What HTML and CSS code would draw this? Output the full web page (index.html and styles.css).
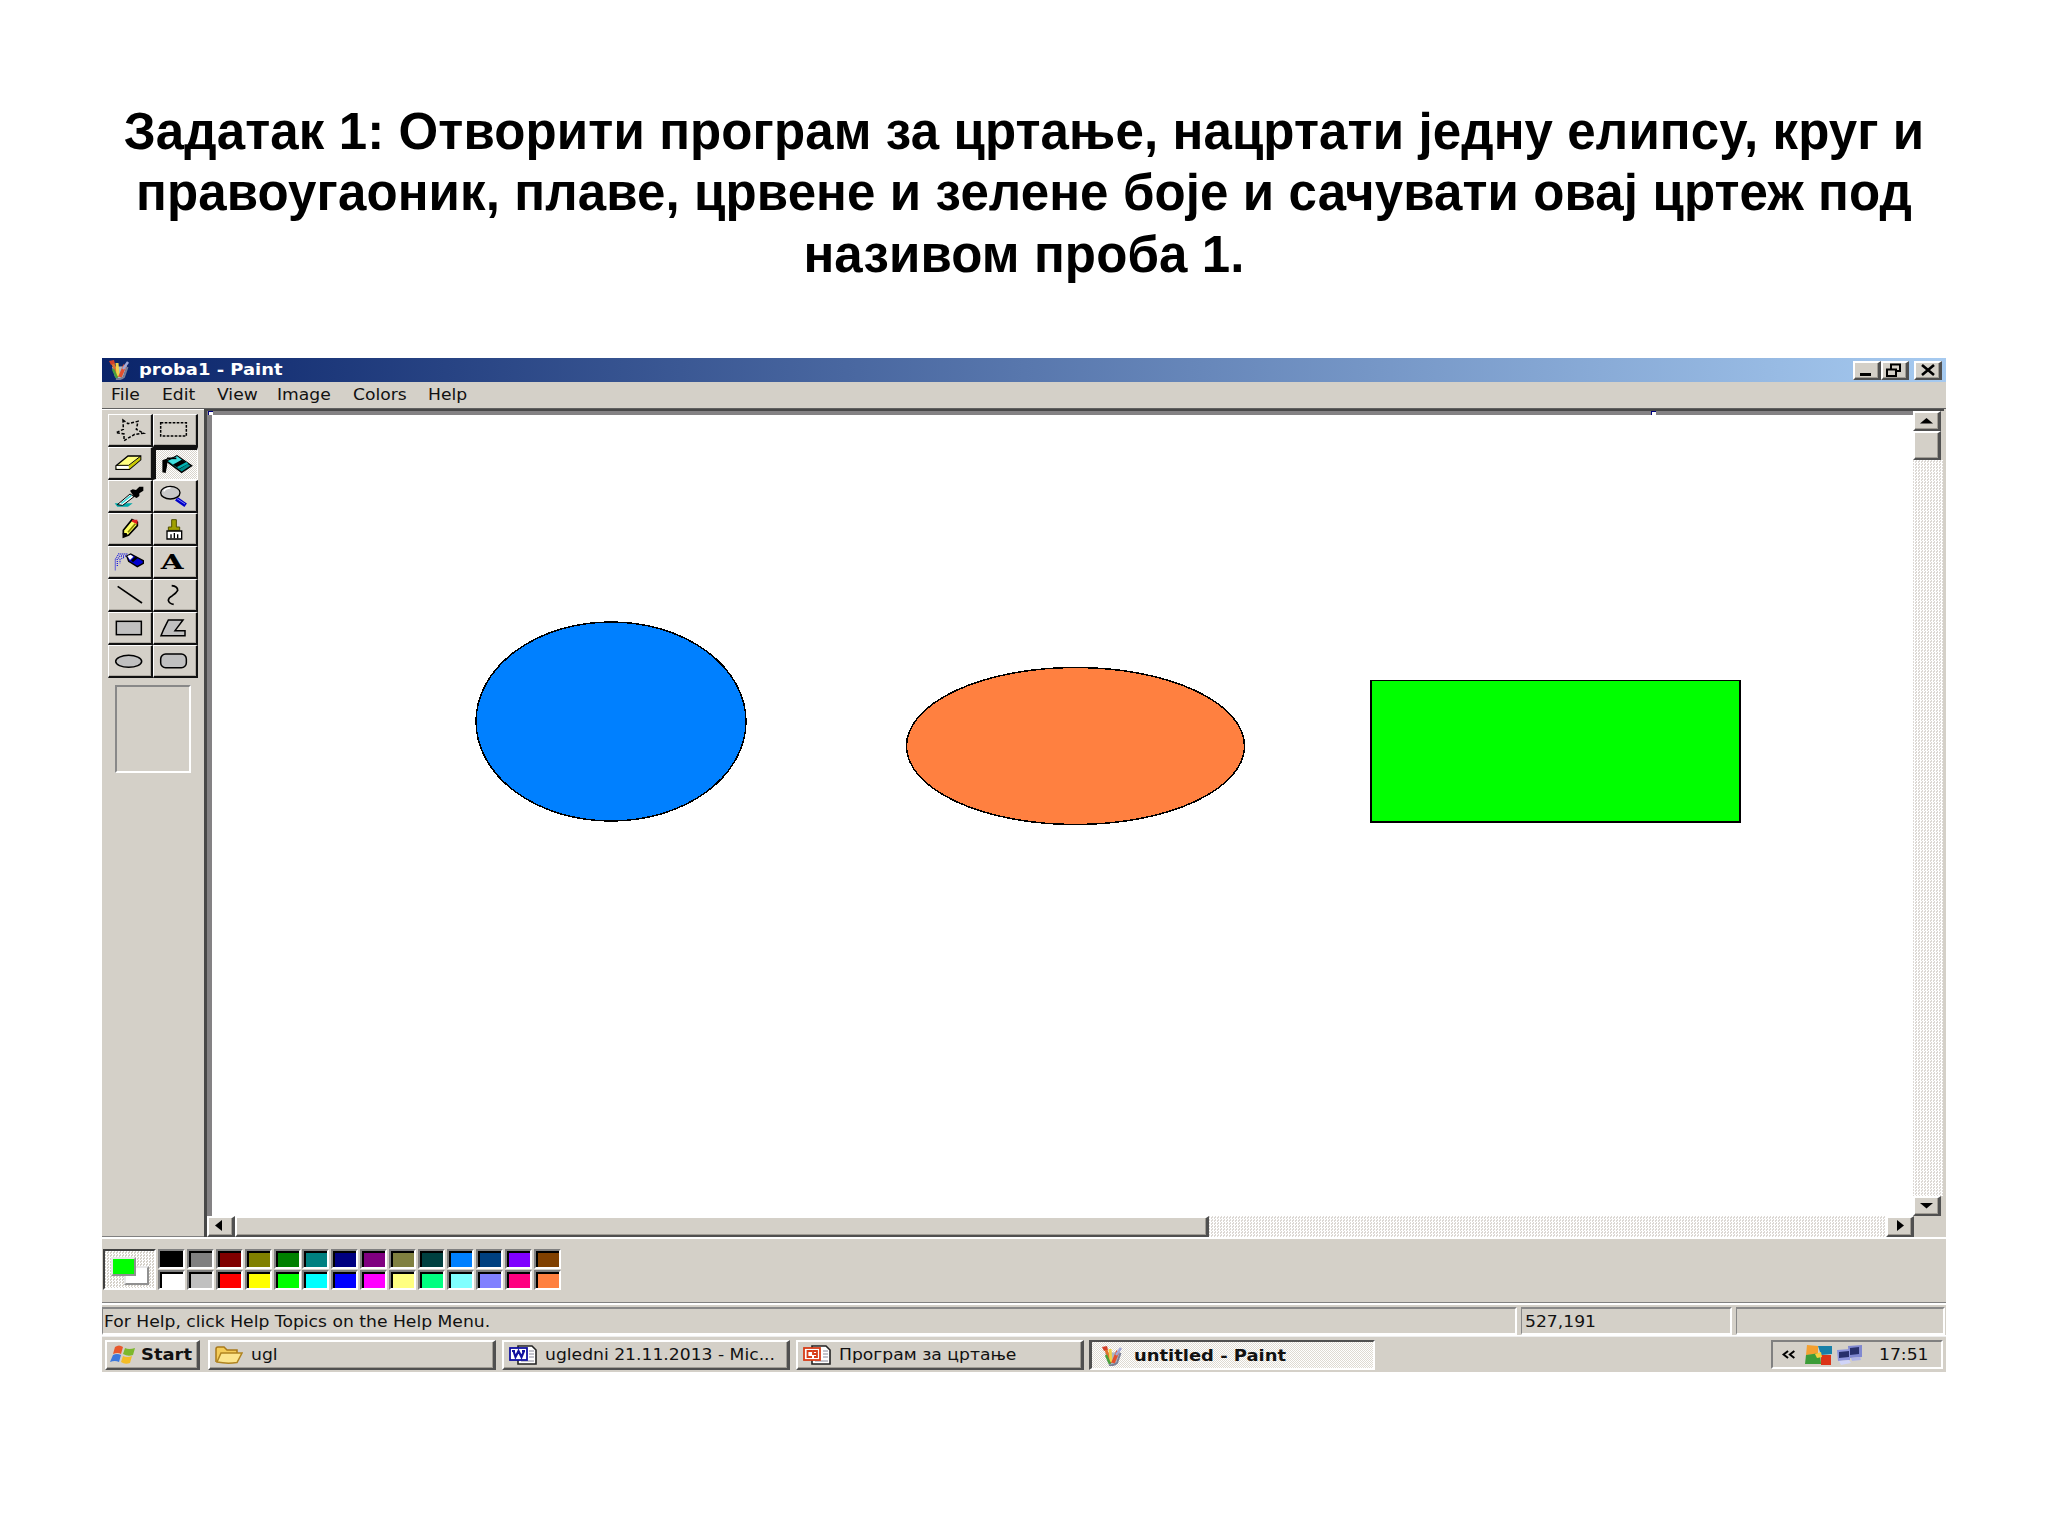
FILE: index.html
```
<!DOCTYPE html>
<html lang="sr">
<head>
<meta charset="utf-8">
<title>proba1 - Paint</title>
<link rel="stylesheet" href="styles.css">
</head>
<body>
<h1 class="task">Задатак 1: Отворити програм за цртање, нацртати једну елипсу, круг и<br>правоугаоник, плаве, црвене и зелене боје и сачувати овај цртеж под<br>називом проба 1.</h1>

<svg class="defs" width="0" height="0">
  <symbol id="cup" viewBox="0 0 20 20">
    <path d="M3 7 L6 17 Q10 20 14 17 L18 6 Z" fill="#a9b6c4"/>
    <path d="M0 1 L5 0 L6 4 L2 5 Z" fill="#d4402a"/>
    <path d="M4 4 L9 17" stroke="#e0702c" stroke-width="3"/>
    <path d="M8 3 L9 16" stroke="#f0d24a" stroke-width="3"/>
    <path d="M16 5 L11 17" stroke="#e4502e" stroke-width="3.500"/>
    <path d="M4 9 L8 18" stroke="#4aa03c" stroke-width="2.500"/>
    <path d="M19 2 L14 9" stroke="#a0a8d8" stroke-width="2.500"/>
    <path d="M18.500 7 L15 17 Q11 20 7 19" stroke="#7a7f96" stroke-width="2" fill="none"/>
  </symbol>
</svg>

<div class="window">
  <div class="titlebar">
    <svg class="cup"><use href="#cup"/></svg>
    <span class="title wider">proba1 - Paint</span>
    <div class="btn winbtn"><svg viewBox="0 0 28 19"><rect x="7" y="12" width="11" height="3"/></svg></div>
    <div class="btn winbtn"><svg viewBox="0 0 28 19"><path d="M10 8V3.500H19V10H15M6 8.500H15V15H6Z M9 3.500H20M5 8.500H16" fill="none" stroke="#000" stroke-width="2"/></svg></div>
    <div class="btn winbtn close"><svg viewBox="0 0 28 19"><path d="M8 4L20 14M20 4L8 14" stroke="#000" stroke-width="2.600"/></svg></div>
  </div>
  <div class="menu">
    <span class="wide m1">File</span><span class="wide m2">Edit</span><span class="wide m3">View</span><span class="wide m4">Image</span><span class="wide m5">Colors</span><span class="wide m6">Help</span>
  </div>

  <div class="work">
    <div class="side">
      <div class="tools">
        <div class="tool"><svg viewBox="0 0 134 99"><path d="M45 18L60 29L90 22L85 46L107 58L80 61L48 80L48 60L24 56L46 46Z" fill="none" stroke="#000" stroke-width="4.500" stroke-dasharray="9 5"/></svg></div>
        <div class="tool"><svg viewBox="0 0 134 99"><rect x="23" y="26" width="77" height="40" fill="none" stroke="#000" stroke-width="4.500" stroke-dasharray="8 4"/></svg></div>
        <div class="tool"><svg viewBox="0 0 134 99"><path d="M24 56L60 27H98V38L64 67H24Z" fill="#ffff80" stroke="#000" stroke-width="4"/><path d="M26 57H62V65H26Z" fill="#fff"/><path d="M62 57L97 29V38L64 66Z" fill="#c8c800"/><path d="M26 55H62L97 28" fill="none" stroke="#000" stroke-width="3"/></svg></div>
        <div class="tool on"><svg viewBox="0 0 134 99"><path d="M28 40L44 34L42 58L38 78L28 76Z"/><path d="M40 42L72 26L116 56L86 76Z" fill="#008c8c" stroke="#000" stroke-width="4"/><path d="M46 42L72 28L88 40L60 52Z" fill="#40e0e0"/><path d="M60 53L86 38L106 50L80 66Z"/><path d="M72 60L100 45L106 50L78 65Z" fill="#00b4b4"/><path d="M42 34H70" stroke="#000" stroke-width="5"/></svg></div>
        <div class="tool"><svg viewBox="0 0 134 99"><path d="M20 70H74L60 80H28Z" fill="#00a8a8"/><path d="M28 74L66 42L78 50L44 76Z" fill="#fff" stroke="#000" stroke-width="3"/><path d="M40 70L70 46" stroke="#40d8d8" stroke-width="5"/><path d="M66 32L74 28L84 30L94 20H106V32L94 40V48L86 54L78 50Z"/></svg></div>
        <div class="tool"><svg viewBox="0 0 134 99"><path d="M70 56L98 76" stroke="#0000c8" stroke-width="13"/><path d="M72 56L96 72" stroke="#8080ff" stroke-width="3"/><ellipse cx="52" cy="38" rx="29" ry="19" fill="#c8c8c8" stroke="#000" stroke-width="4"/><path d="M32 34Q38 24 52 24" stroke="#fff" stroke-width="4" fill="none"/></svg></div>
        <div class="tool"><svg viewBox="0 0 134 99"><path d="M46 52L72 20L88 28V38L62 66L46 72Z" fill="#ffff60" stroke="#000" stroke-width="5"/><path d="M60 58L82 32" stroke="#808000" stroke-width="5"/><path d="M72 20H88V34L72 26Z" fill="#e02020"/><path d="M44 60H56L58 66L46 74Z"/></svg></div>
        <div class="tool"><svg viewBox="0 0 134 99"><path d="M56 20H70V42H80V52H46V42H56Z" fill="#a0a000" stroke="#505000" stroke-width="3"/><path d="M42 54H86V78H42Z" fill="#fff" stroke="#000" stroke-width="4"/><path d="M54 64V76M64 60V76M74 64V76" stroke="#000" stroke-width="4"/></svg></div>
        <div class="tool"><svg viewBox="0 0 134 99"><path d="M58 24H32L22 40V74M54 30H36L28 40V62M48 34L36 40V52" fill="none" stroke="#2020e0" stroke-width="4" stroke-dasharray="3 3"/><path d="M56 30L68 24L106 44V52L88 62L62 46Z" stroke="#000" stroke-width="4" fill="#0000d0"/><path d="M58 30L68 26L76 32L66 42Z" fill="#fff"/><path d="M72 46L86 34" stroke="#000" stroke-width="8"/></svg></div>
        <div class="tool letter"><span>A</span></div>
        <div class="tool"><svg viewBox="0 0 134 99"><path d="M29 22L102 72" stroke="#000" stroke-width="5"/></svg></div>
        <div class="tool"><svg viewBox="0 0 134 99"><path d="M56 20Q74 22 74 34Q70 42 58 50Q46 56 46 64Q48 74 62 76" fill="none" stroke="#000" stroke-width="5"/></svg></div>
        <div class="tool"><svg viewBox="0 0 134 99"><rect x="25" y="28" width="75" height="40" fill="#c0c0c0" stroke="#000" stroke-width="4.500"/></svg></div>
        <div class="tool"><svg viewBox="0 0 134 99"><path d="M46 24H90L66 56H96V71H24L32 52Z" fill="#c0c0c0" stroke="#000" stroke-width="4.500"/></svg></div>
        <div class="tool"><svg viewBox="0 0 134 99"><ellipse cx="62" cy="49" rx="39" ry="18" fill="#c0c0c0" stroke="#000" stroke-width="4.500"/></svg></div>
        <div class="tool"><svg viewBox="0 0 134 99"><rect x="23" y="27" width="77" height="41" rx="15" fill="#c0c0c0" stroke="#000" stroke-width="4.500"/></svg></div>
      </div>
      <div class="options"></div>
    </div>
    <div class="view">
      <div class="row">
        <div class="canvas">
          <i class="handle h1"></i><i class="handle h2"></i>
          <svg class="drawing" viewBox="212 415 1702 801" shape-rendering="crispEdges">
            <g stroke="#000" stroke-width="1.500">
              <ellipse cx="611" cy="721.500" rx="135" ry="99.500" fill="#0080ff"/>
              <ellipse cx="1075.500" cy="746" rx="169" ry="78.500" fill="#ff8040"/>
              <rect x="1371" y="680.500" width="369" height="141.500" fill="#00ff00"/>
            </g>
          </svg>
        </div>
        <div class="vscroll">
          <div class="btn sbtn"><svg viewBox="0 0 28 20"><path d="M7 12.500L13.500 7L20 12.500Z"/></svg></div>
          <div class="btn vthumb"></div>
          <div class="track"></div>
          <div class="btn sbtn"><svg viewBox="0 0 28 20"><path d="M7 7L13.500 12.500L20 7Z"/></svg></div>
        </div>
      </div>
      <div class="hscroll">
        <div class="btn sbtn"><svg viewBox="0 0 28 20"><path d="M15 4V15L8 9.500Z"/></svg></div>
        <div class="btn hthumb"></div>
        <div class="track"></div>
        <div class="btn sbtn"><svg viewBox="0 0 28 20"><path d="M11 4V15L18 9.500Z"/></svg></div>
        <div class="corner"></div>
      </div>
    </div>
  </div>

  <div class="palette">
    <div class="current"><i class="back"></i><i class="fore"></i></div>
    <div class="colors" id="colors"></div>
  </div>

  <div class="status">
    <div class="pane p1"><span class="wide">For Help, click Help Topics on the Help Menu.</span></div>
    <div class="pane p2"><span class="wide">527,191</span></div>
    <div class="pane p3"></div>
  </div>

  <div class="taskbar">
    <div class="btn start">
      <svg class="flag" viewBox="0 0 26 20"><path d="M5 2Q9 -1 13 2L11 9Q8 7 3 9Z" fill="#e8582c"/><path d="M15 3Q19 5 25 3L23 10Q18 12 13 9Z" fill="#7cb82c"/><path d="M3 10Q7 8 11 10L9 17Q5 15 0 17Z" fill="#3c78dc"/><path d="M13 11Q17 13 22 11L20 18Q15 20 11 17Z" fill="#f4bc24"/></svg>
      <b class="wider">Start</b>
    </div>
    <div class="btn task-btn">
      <svg class="ico" viewBox="0 0 28 20"><path d="M1 17V4Q1 2 3 2H9L12 5H22V8" fill="#f4cc58" stroke="#a87818" stroke-width="1.500"/><path d="M2 17L6 8H27L22 17.500Q12 19 2 17Z" fill="#fce58c" stroke="#b08420" stroke-width="1.500"/></svg>
      <span class="wide">ugl</span>
    </div>
    <div class="btn task-btn">
      <svg class="ico" viewBox="0 0 28 20"><path d="M9 1H23L27 5V19H9Z" fill="#fff" stroke="#222" stroke-width="1.600"/><path d="M20 6H25M20 9H25M20 12H25M12 16H25" stroke="#889"/><rect x="1" y="3" width="17" height="12" fill="#fff" stroke="#1010a0" stroke-width="1.800"/><path d="M3 6H6M4.500 6L6.500 12L9.500 6L12.500 12L15 6M13 6H16" fill="none" stroke="#1010a0" stroke-width="2.200"/></svg>
      <span class="wide">ugledni 21.11.2013 - Mic...</span>
    </div>
    <div class="btn task-btn">
      <svg class="ico" viewBox="0 0 28 20"><path d="M9 1H23L27 5V19H9Z" fill="#fff" stroke="#222" stroke-width="1.600"/><path d="M20 6H25M20 9H25M20 12H25M12 16H25" stroke="#889"/><rect x="1" y="3" width="16" height="12" fill="#fff" stroke="#d83c18" stroke-width="1.800"/><path d="M9 6H4.500V12H9M11 12H14V6H10V9H14" fill="none" stroke="#d83c18" stroke-width="1.800"/></svg>
      <span class="wide">Програм за цртање</span>
    </div>
    <div class="task-btn active">
      <svg class="cup"><use href="#cup"/></svg>
      <b class="wider">untitled - Paint</b>
    </div>
    <div class="tray">
      <svg class="chev" viewBox="0 0 15 10"><path d="M7 1L2 5L7 9M14 1L9 5L14 9" fill="none" stroke="#000" stroke-width="2.200"/></svg>
      <svg class="avg" viewBox="0 0 28 20"><path d="M2 0L13 1V9L1 10Z" fill="#f4a030"/><path d="M13 1H27V9L16 10Z" fill="#1880a8"/><path d="M1 10L15 8L16 19H0Z" fill="#3c9c38"/><path d="M16 10H26V20H16Z" fill="#dc3418"/><path d="M10 9L16 7L17 12L12 13Z" fill="#f8d040"/></svg>
      <svg class="net" viewBox="0 0 26 20"><path d="M11 1L25 0V12L12 13Z" fill="#8088d0"/><path d="M13 3L22 2V9L13 10Z" fill="#28306c"/><path d="M14 13L23 12L24 15L15 16Z" fill="#b0b4e8"/><path d="M0 5L13 4V15L1 16Z" fill="#8c94dc"/><path d="M2 7L12 6V12L2 13Z" fill="#28306c"/><path d="M2 16L12 15L14 18L4 20Z" fill="#d0d4f8"/></svg>
      <span class="clock wide">17:51</span>
    </div>
  </div>
</div>

<script>
var top_row = ["#000000","#808080","#800000","#808000","#008000","#008080","#000080","#800080","#808040","#004040","#0080ff","#004080","#8000ff","#804000"];
var bottom_row = ["#ffffff","#c0c0c0","#ff0000","#ffff00","#00ff00","#00ffff","#0000ff","#ff00ff","#ffff80","#00ff80","#80ffff","#8080ff","#ff0080","#ff8040"];
var colors = document.getElementById("colors");
top_row.concat(bottom_row).forEach(function(c) {
  var el = document.createElement("i");
  el.className = "swatch";
  el.style.backgroundColor = c;
  colors.appendChild(el);
});
</script>
</body>
</html>
```
FILE: styles.css
```
* {
  box-sizing: border-box;
}

body {
  margin: 0;
  background: #fff;
  font-family: "DejaVu Sans", Verdana, sans-serif;
  font-size: 15px;
  color: #111;
}

svg {
  display: block;
  flex: none;
}

.defs {
  position: absolute;
}

.task {
  margin: 0;
  padding-top: 101px;
  height: 358px;
  font: bold 51px/61.4px "Liberation Sans", Arial, sans-serif;
  letter-spacing: 0.12px;
  text-align: center;
  white-space: nowrap;
  color: #000;
}

.window {
  width: 1844px;
  height: 1014px;
  margin-left: 102px;
  background: #d4d0c8;
  display: flex;
  flex-direction: column;
}

.btn {
  background: #d4d0c8;
  border: 2px solid;
  border-color: #fff #505050 #505050 #fff;
  border-right-width: 3px;
  box-shadow: inset -1px -1px 0 #a09c94;
  flex: none;
}

.cup {
  width: 20px;
  height: 20px;
}

/* stretched ui text */
.wide, .wider {
  display: inline-block;
  white-space: nowrap;
  transform: scaleX(1.145);
  transform-origin: 0 50%;
}

.wider {
  transform: scaleX(1.195);
}

/* title and menu */
.titlebar {
  height: 24px;
  background: linear-gradient(to right, #0a246a, #a6caf0);
  display: flex;
  align-items: center;
  padding: 0 4px 0 7px;
}

.title {
  color: #fff;
  font-weight: bold;
  font-size: 15px;
  margin: 0 auto 0 10px;
}

.winbtn {
  width: 28px;
  height: 19px;
}

.winbtn svg {
  width: 28px;
  height: 19px;
  margin: -2px;
}

.close {
  margin-left: 5px;
}

.menu {
  height: 26px;
  padding-left: 9px;
  display: flex;
  line-height: 26px;
}

.menu span {
  flex: none;
}

.m1 { width: 51px; }
.m2 { width: 55px; }
.m3 { width: 60px; }
.m4 { width: 76px; }
.m5 { width: 75px; }

/* work area */
.work {
  height: 829px;
  display: flex;
  border-top: 1px solid #606060;
}

.side {
  width: 102px;
  padding: 4px 0 0 5.500px;
  border-top: 1px solid #fff;
  border-bottom: 1px solid #808080;
}

.tools {
  display: grid;
  grid-template-columns: 45px 45px;
  grid-auto-rows: 33px;
}

.tool {
  border: solid;
  border-width: 1px 2px 2px 1px;
  border-color: #fff #111 #111 #fff;
  box-shadow: inset -1px -1px 0 #b0aca4;
}

.tool svg {
  width: 44.700px;
  height: 33px;
  margin: -1px;
}

.tool.on {
  border-width: 3px 1px 1px 3px;
  border-color: #111 #fff #fff #111;
  background: repeating-conic-gradient(#fff 0 25%, #d8d4cc 0 50%) 0 0 / 2px 2px;
  box-shadow: none;
}

.tool.on svg {
  margin: -3px;
}

.letter {
  font: bold 21px/30px "DejaVu Serif", serif;
  color: #000;
  text-align: center;
}

.letter span {
  display: inline-block;
  transform: translateX(-2px) scaleX(1.4);
}

.options {
  width: 76px;
  height: 88px;
  margin: 7px 0 0 7px;
  border: 2px solid;
  border-color: #888 #fff #fff #888;
}

.view {
  width: 1740px;
  border-left: 3px solid #484848;
  border-top: 2px solid #484848;
  display: flex;
  flex-direction: column;
}

.row {
  display: flex;
  height: 805px;
}

.canvas {
  position: relative;
  width: 1706px;
  border-left: 5px solid #848284;
  border-top: 4px solid #848284;
  background: #fff;
}

.drawing {
  width: 1702px;
  height: 801px;
}

.handle {
  position: absolute;
  top: -4px;
  width: 5px;
  height: 4px;
  background: #fff;
  border: solid #000080;
  border-width: 1px 0 0 1px;
}

.h1 { left: -4px; }
.h2 { left: 1439px; }

.vscroll {
  width: 30px;
  display: flex;
  flex-direction: column;
}

.sbtn {
  width: 28px;
  height: 20px;
}

.sbtn svg {
  width: 28px;
  height: 20px;
  margin: -2px;
}

.vthumb {
  width: 28px;
  height: 29px;
}

.track {
  flex: 1;
  background: repeating-conic-gradient(#fff 0 25%, #dcd8d4 0 50%) 0 0 / 3px 3px;
}

.hscroll {
  display: flex;
  height: 21px;
}

.hthumb {
  width: 974px;
}

.hthumb, .hscroll .sbtn {
  height: 21px;
}

.corner {
  width: 30px;
}

/* palette */
.palette {
  height: 66px;
  border-top: 2px solid #fff;
  border-bottom: 1px solid #808080;
  padding: 10px 0 0 1px;
  display: flex;
}

.current {
  position: relative;
  width: 53px;
  height: 41px;
  margin-right: 2px;
  border: 2px solid;
  border-color: #404040 #fff #fff #404040;
  background: repeating-conic-gradient(#fff 0 25%, #d4d0c8 0 50%) 0 0 / 3px 3px;
}

.fore, .back {
  position: absolute;
  width: 25px;
  height: 19px;
  border: 2px solid;
  border-color: #e8e8e8 #909090 #909090 #e8e8e8;
}

.fore {
  left: 6px;
  top: 6px;
  background: #00ff00;
}

.back {
  left: 19px;
  top: 15px;
  background: #fff;
}

.colors {
  display: grid;
  grid-template-columns: repeat(14, 27px);
  grid-auto-rows: 20px;
  align-content: start;
  column-gap: 1.900px;
  row-gap: 1px;
}

.swatch {
  border: 2px solid;
  border-color: #808080 #fff #fff #808080;
  box-shadow: inset 2px 2px 0 #000;
}

/* status bar */
.status {
  height: 33px;
  border-top: 2px solid #fff;
  border-bottom: 1px solid #fff;
  padding-top: 2px;
  display: flex;
  gap: 4px;
}

.pane {
  height: 28px;
  border: 2px solid;
  border-color: #888 #fff #fff #888;
  border-left-width: 1px;
  padding-left: 1px;
  line-height: 26px;
}

.p1 { width: 1415px; }
.p2 { width: 211px; padding-left: 3px; }
.p3 { width: 209px; }

/* taskbar */
.taskbar {
  height: 36px;
  border-top: 1px solid #eee;
  padding: 3px 3px 0 3px;
  display: flex;
}

.start {
  width: 95px;
  height: 30px;
  margin-right: 8px;
  padding-left: 3px;
  display: flex;
  align-items: center;
}

.start b {
  margin-left: 5px;
}

.flag {
  width: 26px;
  height: 20px;
}

.task-btn {
  width: 288px;
  height: 30px;
  margin-right: 5.800px;
  padding-left: 5px;
  display: flex;
  align-items: center;
}

.ico {
  width: 28px;
  height: 20px;
  margin-right: 8px;
}

.active {
  width: 286px;
  border: 2px solid;
  border-color: #505050 #fff #fff #505050;
  border-left-width: 3px;
  background: repeating-conic-gradient(#fff 0 25%, #dedad2 0 50%) 0 0 / 2px 2px;
  padding: 2px 0 0 9px;
}

.active .cup {
  margin-right: 11px;
  width: 22px;
}

.tray {
  width: 172px;
  height: 29px;
  margin-left: auto;
  border: 2px solid;
  border-color: #808080 #fff #fff #808080;
  display: flex;
  align-items: center;
  padding-left: 8px;
}

.chev { width: 15px; height: 9px; }
.avg { width: 28px; height: 20px; margin-left: 9px; }
.net { width: 26px; height: 20px; margin-left: 4px; }
.clock { margin-left: 16px; }
```
